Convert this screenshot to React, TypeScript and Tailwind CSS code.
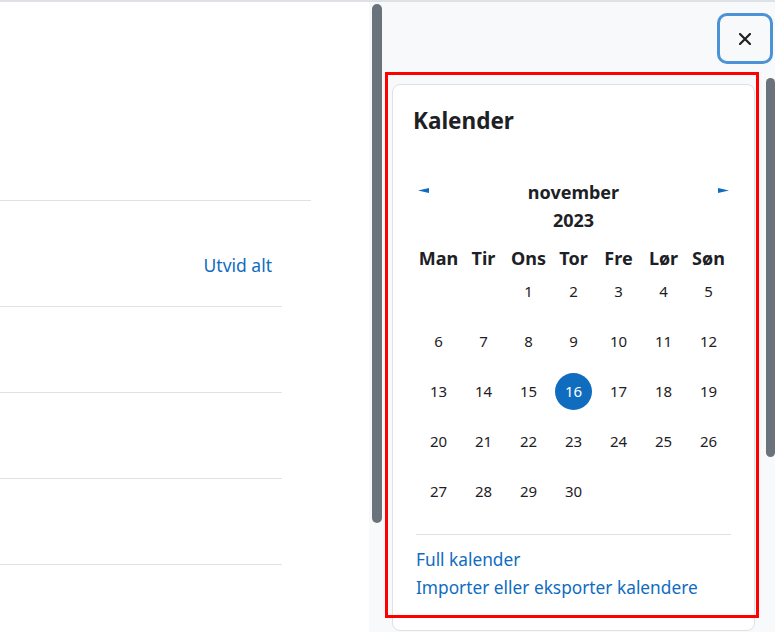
import React from "react";

const weekdays = ["Man", "Tir", "Ons", "Tor", "Fre", "Lør", "Søn"];
const cells: (number | null)[] = [null, null, 1, 2, 3, 4, 5];
for (let d = 6; d <= 30; d++) cells.push(d);
while (cells.length % 7 !== 0) cells.push(null);

function ArrowLeft() {
  return (
    <svg width="11" height="5" viewBox="0 0 11 5">
      <polygon points="0,2.5 11,0 11,5" fill="#0f6cbf" />
    </svg>
  );
}
function ArrowRight() {
  return (
    <svg width="11" height="5" viewBox="0 0 11 5">
      <polygon points="11,2.5 0,0 0,5" fill="#0f6cbf" />
    </svg>
  );
}

export default function App() {
  return (
    <div className="relative w-[775px] h-[632px] overflow-hidden bg-white font-['Noto_Sans',sans-serif] text-[#1d2125]">
      <div className="h-[2px] bg-[#dee2e6]" />
      <div className="flex h-[630px]">
        {/* main content */}
        <main className="w-[369px] bg-white">
          <div className="h-[198px]" />
          <div className="w-[311px] border-t border-[#dee2e6]" />
          <div className="w-[282px] h-[105px] flex justify-end pt-[50px] pr-[10px]">
            <a className="text-[17.5px] leading-[28px] text-[#0f6cbf]">Utvid alt</a>
          </div>
          <div className="w-[282px] h-[86px] border-t border-[#dee2e6]" />
          <div className="w-[282px] h-[86px] border-t border-[#dee2e6]" />
          <div className="w-[282px] h-[86px] border-t border-[#dee2e6]" />
          <div className="w-[282px] h-[66px] border-t border-[#dee2e6]" />
        </main>
        {/* main scrollbar */}
        <div className="w-[13px] bg-[#f8f9fa] pt-[2px] pl-[3px]">
          <div className="w-[10px] h-[519px] rounded-full bg-[#6a737b]" />
        </div>
        {/* drawer */}
        <aside className="flex-1 bg-[#f8f9fa] flex flex-col">
          <div className="flex justify-end pt-[11px] pr-[2px] pb-[12px]">
            <button className="w-[56px] h-[51px] rounded-[10px] border-[3px] border-[#4b92d6] flex items-center justify-center">
              <svg width="12" height="12" viewBox="0 0 12 12">
                <path d="M1 1 L11 11 M11 1 L1 11" stroke="#1d2125" strokeWidth="2.2" strokeLinecap="round" />
              </svg>
            </button>
          </div>
          <div className="flex">
            <div className="pl-[10px] pr-[9px] pt-[8px]">
              <div className="w-[363px] bg-white border border-[#dee2e6] rounded-[8px] px-[20px] pt-[22px] pb-[28px]">
                <h5 className="text-[22.5px] leading-[28px] font-bold">Kalender</h5>
                <div className="mx-[3px] mt-[43px]">
                  <div className="grid grid-cols-[1fr_auto_1fr] h-[28px]">
                    <div className="flex items-center pb-[4px] pl-[2px]">
                      <ArrowLeft />
                    </div>
                    <div className="text-[18px] leading-[28px] font-bold text-center">november</div>
                    <div className="flex items-center justify-end pb-[4px] pr-[2px]">
                      <ArrowRight />
                    </div>
                  </div>
                  <div className="text-[18px] leading-[28px] font-bold text-center">2023</div>
                  <div className="grid grid-cols-7 mt-[16px]">
                    {weekdays.map((w) => (
                      <div key={w} className="text-[18px] leading-[16px] h-[16px] font-bold text-center">
                        {w}
                      </div>
                    ))}
                  </div>
                  <div className="grid grid-cols-7">
                    {cells.map((c, i) => (
                      <div key={i} className="h-[50px] flex items-center justify-center text-[15px]">
                        {c === 16 ? (
                          <span className="w-[37px] h-[37px] rounded-full bg-[#0f6cbf] text-white flex items-center justify-center">
                            16
                          </span>
                        ) : (
                          c ?? ""
                        )}
                      </div>
                    ))}
                  </div>
                  <div className="mt-[18px] border-t border-[#dee2e6]" />
                  <div className="pt-[11px] text-[17.3px] leading-[28px] text-[#0f6cbf]">
                    <div>Full kalender</div>
                    <div>Importer eller eksporter kalendere</div>
                  </div>
                </div>
              </div>
            </div>
            <div className="w-[11px] pt-[2px] pl-[2px]">
              <div className="w-[9px] h-[379px] rounded-full bg-[#6a737b]" />
            </div>
          </div>
        </aside>
      </div>
      {/* highlight overlay */}
      <div className="absolute left-[385px] top-[72px] w-[374px] h-[546px] border-[3px] border-[#ff0000] pointer-events-none" />
    </div>
  );
}
